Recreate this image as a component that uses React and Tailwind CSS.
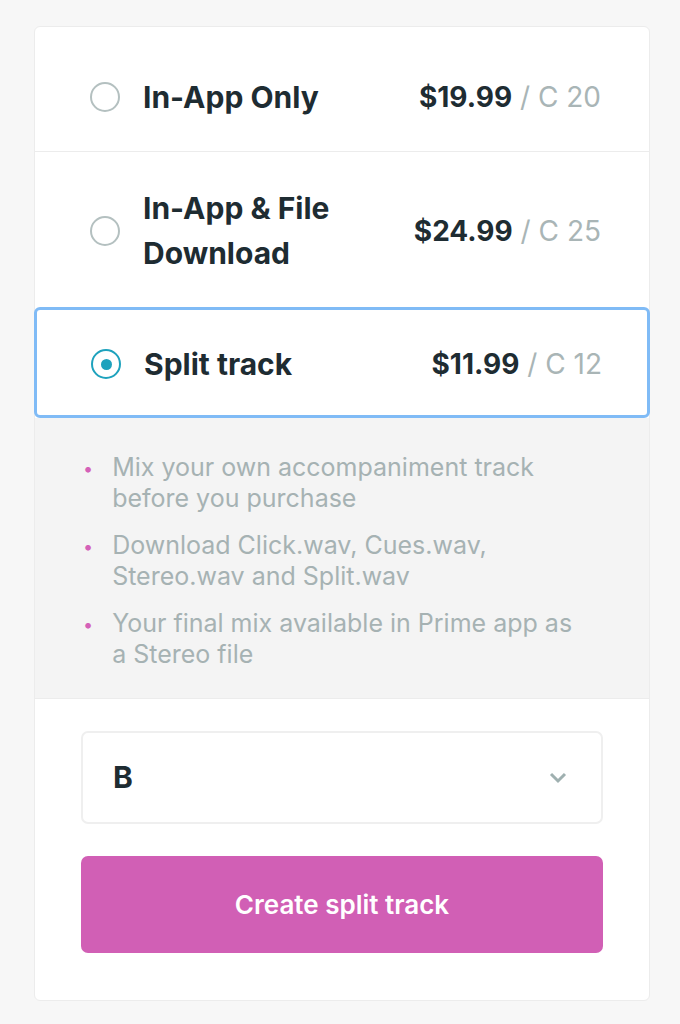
import React, { useState } from 'react';

const options = [
  { id: 'inapp', label: 'In-App Only', price: '$19.99', credits: 'C 20' },
  { id: 'file', label: 'In-App & File Download', price: '$24.99', credits: 'C 25' },
  { id: 'split', label: 'Split track', price: '$11.99', credits: 'C 12' },
];

const features = [
  'Mix your own accompaniment track before you purchase',
  'Download Click.wav, Cues.wav, Stereo.wav and Split.wav',
  'Your final mix available in Prime app as a Stereo file',
];

const Radio = ({ checked }) => (
  <span
    className={
      checked
        ? 'flex h-[30px] w-[30px] shrink-0 items-center justify-center rounded-full border-2 border-[#1ea2bd]'
        : 'flex h-[30px] w-[30px] shrink-0 items-center justify-center rounded-full border-2 border-[#b4c0c0]'
    }
  >
    {checked && <span className="h-[11px] w-[11px] rounded-full bg-[#1ea2bd]" />}
  </span>
);

export default function App() {
  const [selected, setSelected] = useState('split');

  return (
    <div className="min-h-[1024px] bg-[#f7f7f7] pl-[34px] pr-[30px] pt-[26px] pb-[25px] font-['Inter',sans-serif]">
      <div className="rounded-[6px] border border-[#ececec] bg-white">
        {options.map((opt, idx) => {
          const isSel = selected === opt.id;
          return (
            <button
              key={opt.id}
              onClick={() => setSelected(opt.id)}
              className={
                isSel
                  ? '-mx-px flex h-[111px] w-[calc(100%+2px)] items-center gap-[23px] rounded-[6px] border-[3px] border-[#80bbf6] pt-[3px] pl-[54px] pr-[45px] text-left'
                  : idx === 0
                  ? 'flex h-[125px] w-full items-center gap-[23px] border-b border-[#ececec] pt-[16px] pl-[55px] pr-[48px] text-left'
                  : 'flex h-[155px] w-full items-center gap-[23px] pt-[3px] pl-[55px] pr-[48px] text-left'
              }
            >
              <Radio checked={isSel} />
              <span className="flex-1 text-[30px] font-bold leading-[45px] text-[#1e2c32]">
                {opt.label}
              </span>
              <span className="shrink-0 text-[28px] text-[#a9b5b6]">
                <span className="font-bold text-[#1e2c32]">{opt.price}</span> / {opt.credits}
              </span>
            </button>
          );
        })}

        <ul className="flex flex-col gap-[16px] border-b border-[#ececec] bg-[#f4f4f4] pt-[34px] pb-[28px] pl-[48px] pr-[56px]">
          {features.map((f) => (
            <li key={f} className="flex gap-[19px] text-[25px] leading-[31px] text-[#a6b2b3]">
              <span className="pt-[1px] text-[18px] text-[#d461b8]">•</span>
              <span>{f}</span>
            </li>
          ))}
        </ul>

        <div className="px-[46px] pt-[32px] pb-[47px]">
          <div className="flex h-[93px] items-center justify-between rounded-[7px] border-2 border-[#efefef] pl-[30px] pr-[34px]">
            <span className="text-[30px] font-bold text-[#1e2c32]">B</span>
            <svg width="18" height="12" viewBox="0 0 18 12" fill="none">
              <path d="M2 2l7 7 7-7" stroke="#9fb0b0" strokeWidth="3" />
            </svg>
          </div>
          <button className="mt-[32px] flex h-[97px] w-full items-center justify-center rounded-[7px] bg-[#d15fb5] text-[26px] font-semibold text-white">
            Create split track
          </button>
        </div>
      </div>
    </div>
  );
}
